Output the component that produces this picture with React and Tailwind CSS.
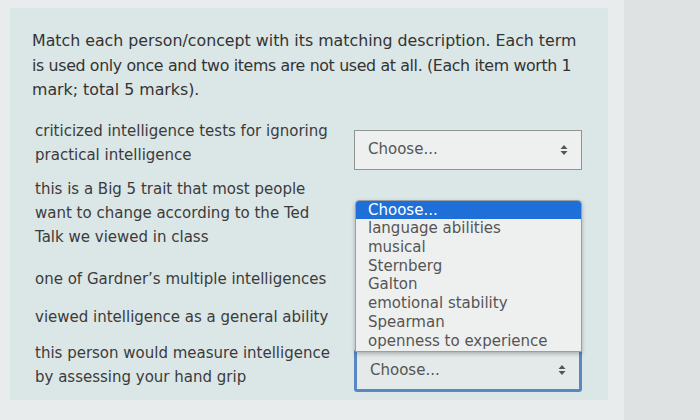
import React from "react";

const font = { fontFamily: '"DejaVu Sans", "Open Sans", sans-serif' };

function Arrows() {
  return (
    <svg width="8" height="12" viewBox="0 0 8 12" className="text-[#555]">
      <path d="M4 1 L7.5 5 L0.5 5 Z" fill="currentColor" />
      <path d="M4 11 L7.5 7 L0.5 7 Z" fill="currentColor" />
    </svg>
  );
}

function Row({ h, lines, selectTop, showSelect, focused }) {
  return (
    <div className="flex" style={{ height: h }}>
      <div className="w-[320px] pl-[25px] text-[15px] leading-[24px] text-[#3b3b3b]">
        {lines.map((l, i) => (
          <div key={i} className="whitespace-nowrap">{l}</div>
        ))}
      </div>
      <div className="pl-[24px]">
        {showSelect && (
          <div
            className={
              "w-[228px] flex items-center justify-between px-[13px] text-[15px] text-[#555] " +
              (focused
                ? "border-[3px] border-[#5b86c4] bg-[#e4e9e9] rounded-[3px] h-[43px]"
                : "border border-[#8f9494] bg-[#eef0f0] h-[40px]")
            }
            style={{ marginTop: selectTop }}
          >
            <span>Choose...</span>
            <Arrows />
          </div>
        )}
      </div>
    </div>
  );
}

export default function App() {
  const options = [
    "language abilities",
    "musical",
    "Sternberg",
    "Galton",
    "emotional stability",
    "Spearman",
    "openness to experience",
  ];
  return (
    <div className="w-[700px] h-[420px] bg-[#e9ecec] relative overflow-hidden" style={font}>
      <div className="absolute right-0 top-0 w-[76px] h-[420px] bg-[#dfe2e3]" />
      <div className="absolute left-[10px] top-[8px] w-[598px] h-[392px] bg-[#dbe6e6]">
        <div className="pl-[22px] pt-[21px] text-[15.8px] leading-[24.5px] text-[#333]">
          <div className="whitespace-nowrap">Match each person/concept with its matching description. Each term</div>
          <div className="whitespace-nowrap tracking-[-0.35px]">is used only once and two items are not used at all. (Each item worth 1</div>
          <div className="whitespace-nowrap">mark; total 5 marks).</div>
        </div>
        <div className="mt-[16px]">
          <Row h={58} lines={["criticized intelligence tests for ignoring", "practical intelligence"]} selectTop={11} showSelect />
          <Row h={90} lines={["this is a Big 5 trait that most people", "want to change according to the Ted", "Talk we viewed in class"]} />
          <Row h={38} lines={["one of Gardner\u2019s multiple intelligences"]} />
          <Row h={36} lines={["viewed intelligence as a general ability"]} />
          <Row h={60} lines={["this person would measure intelligence", "by assessing your hand grip"]} selectTop={8} showSelect focused />
        </div>
        <div className="absolute left-[345px] top-[192px] w-[227px] bg-[#eef0f0] border border-[#9aa0a0] rounded-t-[4px] shadow-[0_2px_4px_rgba(0,0,0,0.25)] text-[15px] leading-[18.8px] text-[#555] overflow-hidden">
          <div className="bg-[#1f6fd8] text-white px-[12px] h-[18px] leading-[18px]">Choose...</div>
          {options.map((o) => (
            <div key={o} className="px-[12px]">{o}</div>
          ))}
        </div>
      </div>
    </div>
  );
}
